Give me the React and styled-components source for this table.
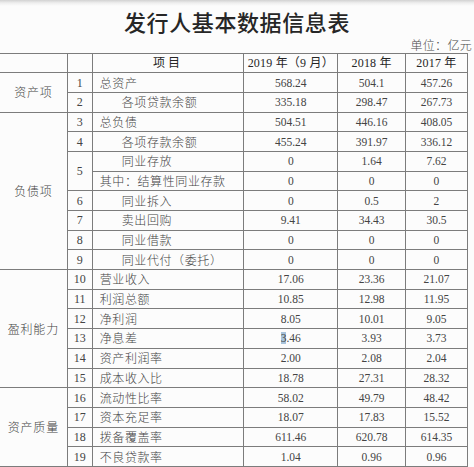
import React from "react";
import styled, { createGlobalStyle } from "styled-components";

const GlobalStyle = createGlobalStyle`
  html, body {
    margin: 0;
    padding: 0;
    background: #fcfcfc;
  }
  body {
    font-family: "Liberation Serif", "Noto Sans CJK SC", serif;
    color: #333;
  }
`;

const Page = styled.div`
  width: 474px;
  height: 467px;
  overflow: hidden;
  background: linear-gradient(#d2d2d2, #efefef 3px, #fcfcfc 6px);
`;

const Title = styled.h1`
  margin: 0;
  padding-top: 8px;
  height: 26px;
  line-height: 26px;
  text-align: center;
  font-family: "Noto Sans CJK SC", sans-serif;
  font-size: 22px;
  font-weight: 500;
  letter-spacing: 0.6px;
  color: #262626;
`;

const Unit = styled.div`
  margin-top: 3px;
  height: 15px;
  line-height: 15px;
  padding-right: 2px;
  text-align: right;
  font-family: "Noto Sans CJK SC", sans-serif;
  font-size: 12px;
  font-weight: 300;
  letter-spacing: 0.3px;
  color: #4a4a4a;
`;

const Table = styled.table`
  margin-top: 0.5px;
  margin-left: -1px;
  width: 468px;
  border-collapse: collapse;
  table-layout: fixed;
`;

const Row = styled.tr`
  height: 19.7px;
`;

const Cell = styled.td`
  padding: 0;
  border: 1px solid #7c7c7c;
  font-size: 12px;
  line-height: 16px;
  color: #444;
  white-space: nowrap;
  overflow: hidden;
`;

const HeadCell = styled(Cell).attrs({ as: "th" })`
  font-weight: normal;
  text-align: center;
  color: #262626;
  letter-spacing: ${(p) => (p.$spaced ? "3px" : "0.2px")};
`;

const GroupCell = styled(Cell)`
  text-align: center;
  font-family: "Noto Sans CJK SC", sans-serif;
  font-weight: 300;
  letter-spacing: 0.8px;
`;

const NumCell = styled(Cell)`
  text-align: center;
  font-size: 12px;
`;

const LabelCell = styled(Cell)`
  padding-left: ${(p) => (p.$indent ? "29px" : "7px")};
  font-family: "Noto Sans CJK SC", sans-serif;
  font-weight: 300;
  letter-spacing: 0.6px;
`;

const ValueCell = styled(Cell)`
  text-align: center;
  font-size: 11.5px;
`;

const Selected = styled.span`
  background: #a9c4dc;
`;

const rows = [
  { group: "资产项", span: 2, n: 1, label: "总资产", v: ["568.24", "504.1", "457.26"] },
  { n: 2, label: "各项贷款余额", indent: true, v: ["335.18", "298.47", "267.73"] },
  { group: "负债项", span: 8, n: 3, label: "总负债", v: ["504.51", "446.16", "408.05"] },
  { n: 4, label: "各项存款余额", indent: true, v: ["455.24", "391.97", "336.12"] },
  { n: 5, nspan: 2, label: "同业存放", indent: true, v: ["0", "1.64", "7.62"] },
  { label: "其中：结算性同业存款", v: ["0", "0", "0"] },
  { n: 6, label: "同业拆入", indent: true, v: ["0", "0.5", "2"] },
  { n: 7, label: "卖出回购", indent: true, v: ["9.41", "34.43", "30.5"] },
  { n: 8, label: "同业借款", indent: true, v: ["0", "0", "0"] },
  { n: 9, label: "同业代付（委托）", indent: true, v: ["0", "0", "0"] },
  { group: "盈利能力", span: 6, n: 10, label: "营业收入", v: ["17.06", "23.36", "21.07"] },
  { n: 11, label: "利润总额", v: ["10.85", "12.98", "11.95"] },
  { n: 12, label: "净利润", v: ["8.05", "10.01", "9.05"] },
  { n: 13, label: "净息差", v: ["3.46", "3.93", "3.73"], mark: true },
  { n: 14, label: "资产利润率", v: ["2.00", "2.08", "2.04"] },
  { n: 15, label: "成本收入比", v: ["18.78", "27.31", "28.32"] },
  { group: "资产质量", span: 4, n: 16, label: "流动性比率", v: ["58.02", "49.79", "48.42"] },
  { n: 17, label: "资本充足率", v: ["18.07", "17.83", "15.52"] },
  { n: 18, label: "拨备覆盖率", v: ["611.46", "620.78", "614.35"] },
  { n: 19, label: "不良贷款率", v: ["1.04", "0.96", "0.96"] },
];

const App = () => {
  return (
    <Page>
      <GlobalStyle />
      <Title>发行人基本数据信息表</Title>
      <Unit>单位：亿元</Unit>
      <Table>
        <colgroup>
          <col style={{ width: "67.7px" }} />
          <col style={{ width: "25px" }} />
          <col style={{ width: "151.6px" }} />
          <col style={{ width: "94px" }} />
          <col style={{ width: "67.7px" }} />
          <col style={{ width: "62px" }} />
        </colgroup>
        <tbody>
          <Row>
            <HeadCell />
            <HeadCell />
            <HeadCell $spaced>项目</HeadCell>
            <HeadCell>2019 年（9 月）</HeadCell>
            <HeadCell>2018 年</HeadCell>
            <HeadCell>2017 年</HeadCell>
          </Row>
          {rows.map((r, i) => (
            <Row key={i}>
              {r.group && <GroupCell rowSpan={r.span}>{r.group}</GroupCell>}
              {r.n && <NumCell rowSpan={r.nspan || 1}>{r.n}</NumCell>}
              <LabelCell $indent={r.indent}>{r.label}</LabelCell>
              {r.v.map((val, j) => (
                <ValueCell key={j}>
                  {r.mark && j === 0 ? (
                    <>
                      <Selected>{val[0]}</Selected>
                      {val.slice(1)}
                    </>
                  ) : (
                    val
                  )}
                </ValueCell>
              ))}
            </Row>
          ))}
        </tbody>
      </Table>
    </Page>
  );
};

export default App;
